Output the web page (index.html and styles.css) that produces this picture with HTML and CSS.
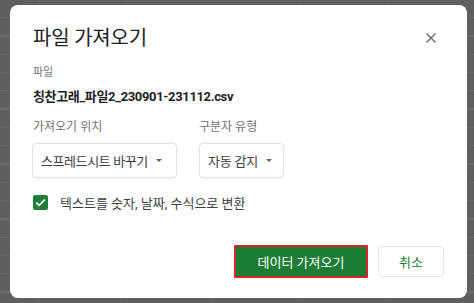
FILE: index.html
```html
<!DOCTYPE html>
<html lang="ko">
<head>
<meta charset="utf-8">
<link rel="stylesheet" href="styles.css">
</head>
<body>
<div class="dialog">
  <div class="header">
    <div class="title">파일 가져오기</div>
    <div class="close">
      <svg width="10" height="10" viewBox="0 0 10 10"><path d="M0.5 0.5L9.5 9.5M9.5 0.5L0.5 9.5" stroke="#5f6368" stroke-width="1.3" fill="none"/></svg>
    </div>
  </div>
  <div class="label first">파일</div>
  <div class="filename">칭찬고래_파일2_230901-231112.csv</div>
  <div class="fields">
    <div class="field f1">
      <div class="label">가져오기 위치</div>
      <div class="select"><span class="value">스프레드시트 바꾸기</span><span class="arrow"></span></div>
    </div>
    <div class="field f2">
      <div class="label">구분자 유형</div>
      <div class="select"><span class="value">자동 감지</span><span class="arrow"></span></div>
    </div>
  </div>
  <div class="check-row">
    <div class="checkbox">
      <svg width="15" height="15" viewBox="0 0 15 15"><path d="M3.3 7.6L6.1 10.3L11.8 4.6" stroke="#fff" stroke-width="1.8" fill="none"/></svg>
    </div>
    <div class="check-text">텍스트를 숫자, 날짜, 수식으로 변환</div>
  </div>
  <div class="actions">
    <div class="btn primary">데이터 가져오기</div>
    <div class="btn cancel">취소</div>
  </div>
</div>
</body>
</html>
```
FILE: styles.css
```css
html, body {
  margin: 0;
  padding: 0;
}
body {
  width: 474px;
  height: 303px;
  overflow: hidden;
  background-color: #5f5f5f;
  background-image:
    repeating-linear-gradient(to bottom, transparent 0, transparent 17px, #6a6a6a 17px, #6a6a6a 18.3px),
    repeating-linear-gradient(to right, transparent 0, transparent 39px, #686868 39px, #686868 40px, transparent 40px, transparent 87px);
  font-family: Roboto, "Noto Sans CJK KR", sans-serif;
  padding-top: 5px;
  box-sizing: border-box;
}
.dialog {
  margin-left: 10px;
  width: 457px;
  height: 293px;
  background: #fff;
  border-radius: 8px;
  box-sizing: border-box;
  padding: 20px 23px 20px 23px;
  display: flex;
  flex-direction: column;
}
.header {
  display: flex;
  align-items: center;
  justify-content: space-between;
  height: 26px;
}
.title {
  font-size: 20px;
  line-height: 26px;
  color: #202124;
  letter-spacing: -0.2px;
}
.close {
  width: 26px;
  height: 26px;
  display: flex;
  align-items: center;
  justify-content: center;
}
.label {
  font-size: 11px;
  line-height: 16px;
  color: #6f7378;
}
.label.first {
  margin-top: 14px;
}
.filename {
  margin-top: 6px;
  font-size: 13px;
  line-height: 20px;
  font-weight: 700;
  color: #202124;
  letter-spacing: -0.35px;
}
.fields {
  margin-top: 12px;
  display: flex;
  gap: 22px;
}
.field .label {
  font-size: 12px;
}
.select {
  margin-top: 8px;
  height: 35px;
  box-sizing: border-box;
  border: 1px solid #e0e2e5;
  border-radius: 4px;
  display: flex;
  align-items: center;
  padding: 0 12px 0 8px;
  gap: 8px;
  font-size: 13px;
  letter-spacing: -0.4px;
  color: #3c4043;
  white-space: nowrap;
  box-shadow: 0 1px 1px rgba(0,0,0,0.04);
}
.value {
  flex: none;
}
.f1 .select { width: 145px; margin-left: -1px; }
.f2 .select { width: 85px; }
.f2 .select .value { letter-spacing: -0.2px; }
.arrow {
  flex: none;
  width: 0;
  height: 0;
  border-left: 3px solid transparent;
  border-right: 3px solid transparent;
  border-top: 3px solid #5f6368;
}
.check-row {
  margin-top: 14px;
  display: flex;
  align-items: center;
  height: 20px;
  gap: 12px;
}
.checkbox {
  width: 15px;
  height: 15px;
  background: #1e7e3a;
  border-radius: 2px;
  display: flex;
}
.check-text {
  font-size: 13px;
  color: #3c4043;
}
.actions {
  margin-top: auto;
  display: flex;
  justify-content: flex-end;
  align-items: center;
  gap: 10px;
}
.btn {
  box-sizing: border-box;
  display: flex;
  align-items: center;
  justify-content: center;
  font-size: 13px;
  border-radius: 3px;
}
.primary {
  width: 134px;
  height: 33px;
  background: #1e7d35;
  border: 2px solid #cf2a2a;
  border-radius: 1px;
  color: #fff;
}
.cancel {
  width: 66px;
  height: 31px;
  border: 1px solid #e3e5e8;
  border-radius: 4px;
  color: #1e7d35;
  background: #fff;
}
```
